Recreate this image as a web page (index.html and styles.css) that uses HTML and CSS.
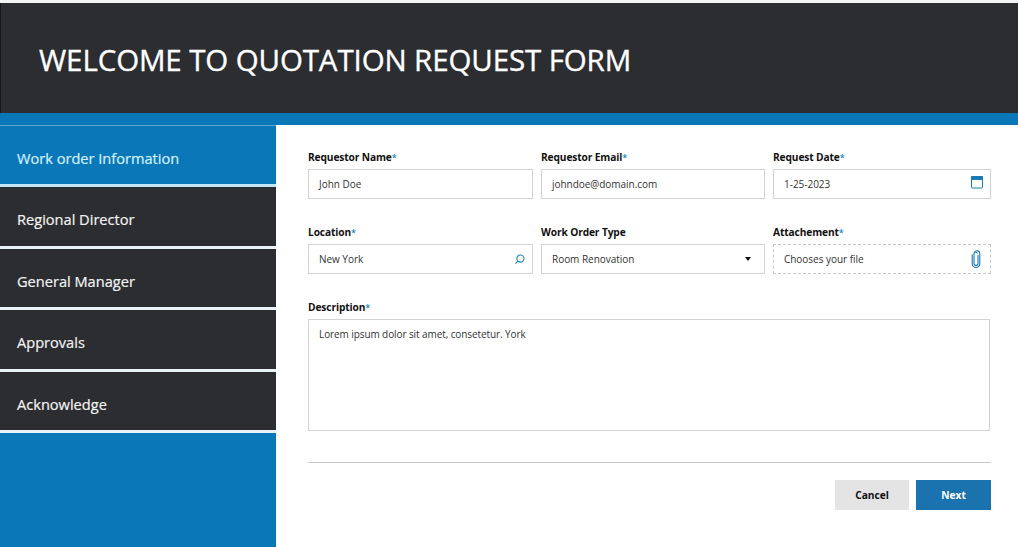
FILE: index.html
```html
<!DOCTYPE html>
<html lang="en">
<head>
<meta charset="utf-8">
<title>Quotation Request Form</title>
<link rel="stylesheet" href="styles.css">
</head>
<body>
<div class="page">
  <header class="banner"><h1>WELCOME TO QUOTATION REQUEST FORM</h1></header>
  <div class="stripe"></div>
  <div class="main">
    <nav class="side">
      <a class="step step-active">Work order Information</a>
      <a class="step">Regional Director</a>
      <a class="step">General Manager</a>
      <a class="step">Approvals</a>
      <a class="step">Acknowledge</a>
    </nav>
    <form class="form">
      <div class="grid">
        <div class="field">
          <div class="label">Requestor Name<span class="req">*</span></div>
          <div class="input">John Doe</div>
        </div>
        <div class="field">
          <div class="label">Requestor Email<span class="req">*</span></div>
          <div class="input">johndoe@domain.com</div>
        </div>
        <div class="field">
          <div class="label">Request Date<span class="req">*</span></div>
          <div class="input">1-25-2023
            <svg class="icon icon-cal" width="12" height="13" viewBox="0 0 12 13" fill="none" stroke="#1a78b4" stroke-width="1"><rect x=".5" y=".5" width="11" height="11.5" rx=".8"/><rect x=".5" y=".8" width="11" height="2.6" fill="#1a78b4"/></svg>
          </div>
        </div>
        <div class="field">
          <div class="label">Location<span class="req">*</span></div>
          <div class="input">New York
            <svg class="icon icon-search" width="11" height="11" viewBox="0 0 12 12" fill="none" stroke="#1a85a8" stroke-width="1.2"><circle cx="7" cy="5" r="3.9"/><path d="M4.2 7.8 1.6 10.6"/></svg>
          </div>
        </div>
        <div class="field">
          <div class="label">Work Order Type</div>
          <div class="input">Room Renovation<span class="caret"></span></div>
        </div>
        <div class="field">
          <div class="label">Attachement<span class="req">*</span></div>
          <div class="input input-file">Chooses your file
            <svg class="icon icon-clip" width="10" height="18" viewBox="0 0 10 18" fill="none" stroke="#1a78b4" stroke-width="1.1"><path d="M7 5v8.5a2 2 0 0 1-4 0V3.6a1.6 1.6 0 0 1 3.2 0"/><path d="M1.2 4.5v9.2a3.8 3.8 0 0 0 7.6 0V3.8A2.8 2.8 0 0 0 3.4 2.6"/></svg>
          </div>
        </div>
      </div>
      <div class="field">
        <div class="label">Description<span class="req">*</span></div>
        <div class="textarea">Lorem ipsum dolor sit amet, consetetur. York</div>
      </div>
      <div class="actions">
        <button type="button" class="btn btn-cancel">Cancel</button>
        <button type="button" class="btn btn-next">Next</button>
      </div>
    </form>
  </div>
</div>
</body>
</html>
```
FILE: styles.css
```css
* { box-sizing: border-box; }
html, body { margin: 0; padding: 0; background: #fff; }
body { font-family: "Open Sans", "Noto Sans", sans-serif; color: #222; }
.page { width: 1018px; height: 547px; overflow: hidden; display: flex; flex-direction: column; background: #fff; border-top: 3px solid #f4f4f4; }
.banner { height: 110px; flex: none; background: #2b2d31; display: flex; align-items: center; padding: 4px 0 0 38px; border-left: 1px solid #15171a; }
.banner h1 { margin: 0; color: #fff; font-size: 29.5px; font-weight: 500; letter-spacing: -0.12px; line-height: 1; -webkit-text-stroke: 0.35px #fff; }
.stripe { height: 12px; flex: none; background: #0a78b8; }
.main { flex: 1; display: flex; min-height: 0; }
.side { width: 276px; flex: none; background: #0a78b8; display: flex; flex-direction: column; border-top: 1px solid #5aa5d2; }
.step { height: 61.5px; flex: none; background: #2b2d31; color: #f2f2f2; font-size: 14.6px; font-weight: 500; display: flex; align-items: center; padding: 6px 0 0 17px; border-bottom: 3px solid #e8f2f7; -webkit-text-stroke: 0.2px currentColor; }
.step-active { background: #0a78b8; color: #d5f0fb; height: 61px; border-bottom-color: #bfe6f2; }
.form { flex: 1; padding: 25px 27px 0 32px; display: flex; flex-direction: column; }
.grid { display: grid; grid-template-columns: 225px 224px 218px; column-gap: 8px; row-gap: 26px; margin-bottom: 26px; }
.field { display: flex; flex-direction: column; }
.label { height: 14px; font-size: 10.2px; font-weight: 700; letter-spacing: -0.12px; color: #111; line-height: 14px; margin-bottom: 5px; }
.req { color: #1a85b8; font-size: 9px; font-weight: 600; line-height: 1; }
.input { height: 30px; border: 1px solid #d2d2d2; padding: 0 10px; font-size: 10px; letter-spacing: -0.03px; color: #333; display: flex; align-items: center; justify-content: space-between; }
.input-file { border: 1px dashed #c8c8c8; }
.icon { flex: none; }
.icon-cal { margin: -3px -3px 0 0; }
.icon-search { margin-right: -3px; }
.icon-clip { margin-right: -1px; }
.caret { width: 0; height: 0; border-left: 3.5px solid transparent; border-right: 3.5px solid transparent; border-top: 4px solid #111; margin-right: 3px; }
.textarea { height: 112px; width: 682px; border: 1px solid #d2d2d2; padding: 6px 10px; font-size: 10px; letter-spacing: -0.09px; line-height: 16px; color: #333; }
.actions { margin-top: 31px; border-top: 1px solid #c8c8c8; padding-top: 17px; display: flex; justify-content: flex-end; gap: 7px; }
.btn { height: 30px; border: 0; padding: 0; font-family: inherit; font-size: 10.2px; font-weight: 700; }
.btn-cancel { width: 74px; background: #e4e4e4; color: #111; }
.btn-next { width: 75px; background: #1a72ae; color: #fff; }
```
